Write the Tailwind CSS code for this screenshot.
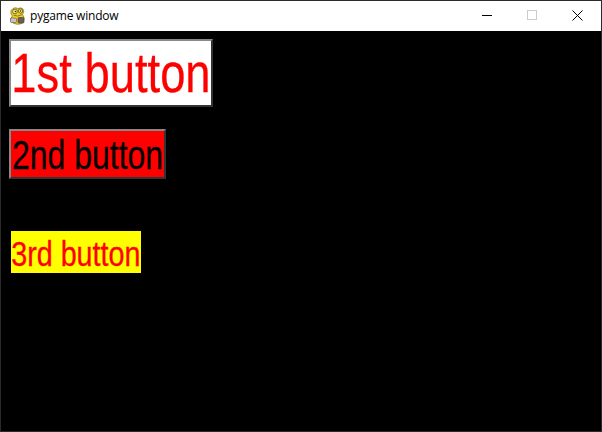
<!DOCTYPE html>
<html>
<head>
<meta charset="utf-8">
<title>pygame window</title>
<script src="https://cdn.jsdelivr.net/npm/@tailwindcss/browser@4"></script>
</head>
<body class="bg-black">
<div class="w-[602px] h-[432px] flex flex-col border border-[#2b2b2b] bg-black overflow-hidden">
  <div class="h-[30px] shrink-0 bg-white flex items-center">
    <svg class="ml-[9px] w-[15px] h-[18px] shrink-0" viewBox="0 0 15 18">
      <path d="M1 7 Q0 3 3 1.500 Q5.500 0 8 1.500 Q11 0 13 2 Q14.500 5 12.500 7.500 Q14.500 10 14 13 L12 16.500 Q8 18 4 16.500 L1 14.500 Q0 11 2.500 9 Z" fill="#f0d028" stroke="#8c7a1e" stroke-width="0.800"/>
      <ellipse cx="5" cy="4.500" rx="2.400" ry="2.300" fill="#f8ec90" stroke="#4a4018" stroke-width="0.700"/>
      <ellipse cx="10.500" cy="4" rx="2.200" ry="2.100" fill="#f8ec90" stroke="#4a4018" stroke-width="0.700"/>
      <circle cx="5.500" cy="4.500" r="0.800" fill="#222"/>
      <circle cx="10.500" cy="4" r="0.800" fill="#222"/>
      <path d="M3.500 8 Q7.500 10.500 12 7.500" fill="none" stroke="#6e5f18" stroke-width="0.800"/>
      <rect x="0.500" y="11" width="6" height="4.500" rx="1" fill="#c4c4ba" stroke="#555" stroke-width="0.600"/>
      <rect x="8" y="10.500" width="6" height="5.500" rx="1" fill="#6a5e5a" stroke="#3c3c3c" stroke-width="0.600"/>
      <circle cx="9.500" cy="12.500" r="0.700" fill="#b04040"/>
    </svg>
    <span class="ml-[5px] text-[12px] tracking-[-0.2px] leading-none text-black font-['Open_Sans',sans-serif]">pygame window</span>
    <div class="ml-auto flex h-full pb-[2px]">
      <div class="w-[46px] flex items-center justify-center">
        <div class="w-[10px] h-px bg-black"></div>
      </div>
      <div class="w-[44px] flex items-center justify-center">
        <div class="w-[10px] h-[10px] border border-[#cccccc]"></div>
      </div>
      <div class="w-[47px] flex items-center justify-center">
        <svg class="w-[11px] h-[11px]" viewBox="0 0 11 11"><path d="M0.500 0.500 L10.500 10.500 M10.500 0.500 L0.500 10.500" stroke="#000" stroke-width="1" fill="none"/></svg>
      </div>
    </div>
  </div>
  <div class="flex-1 flex flex-col items-start pl-[8px] pt-[8px] font-['Liberation_Sans',Arial,sans-serif] [-webkit-text-stroke:0.3px]">
    <button class="w-[204px] h-[68px] border-2 border-t-[#888888] border-l-[#888888] border-b-[#333333] border-r-[#333333] bg-white text-[#ff0000] text-[56px] leading-none flex items-center justify-center whitespace-nowrap"><span class="inline-block scale-x-[0.81]">1st button</span></button>
    <button class="mt-[22px] pt-[2px] w-[157px] h-[50px] border-2 border-t-[#888888] border-l-[#888888] border-b-[#333333] border-r-[#333333] bg-[#ff0000] text-black text-[40px] leading-none flex items-center justify-center whitespace-nowrap"><span class="inline-block scale-x-[0.8]">2nd button</span></button>
    <button class="mt-[52px] ml-[2px] pt-[3px] w-[130px] h-[42px] bg-[#ffff00] text-[#ff0000] text-[35px] leading-none flex items-center justify-center whitespace-nowrap"><span class="inline-block scale-x-[0.82]">3rd button</span></button>
  </div>
</div>
</body>
</html>
